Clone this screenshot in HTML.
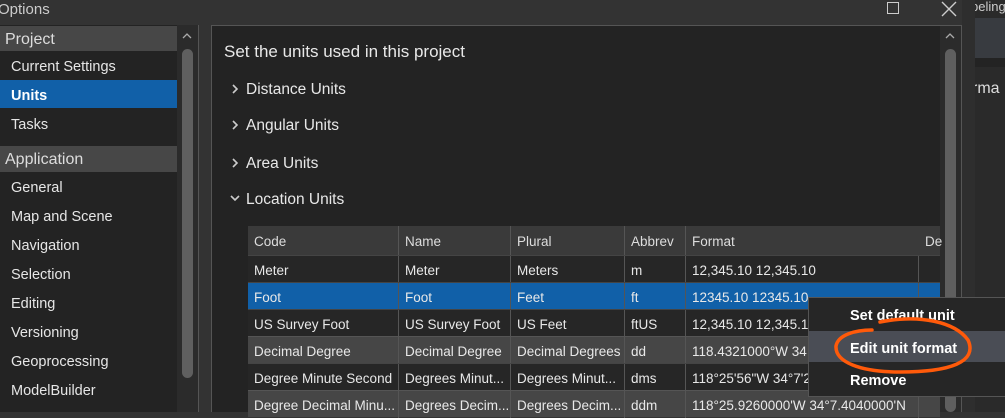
<!DOCTYPE html><html><head><style>
*{margin:0;padding:0;box-sizing:border-box}
body{width:1005px;height:412px;overflow:hidden;background:#333;font-family:"Liberation Sans",sans-serif;color:#e8e8e8;position:relative}
.a{position:absolute}
.li{position:absolute;left:11px;font-size:14.5px;color:#e6e6e6}
.hd{position:absolute;left:0;width:177px;background:#474747;font-size:16px;padding-left:5px;color:#ddd}
.row{position:absolute;left:248px;width:692px;height:27px;font-size:13.5px}
.row div{position:absolute;top:0;height:27px;line-height:29px;padding-left:6px;border-right:1px solid #555;white-space:nowrap;overflow:hidden}
.mi{position:absolute;left:0;width:197px;font-size:14.5px;font-weight:bold;color:#fff;padding-left:41px}
</style></head><body>
<div class="a" style="left:0;top:0;width:975px;height:25px;background:#333"></div>
<div class="a" style="left:-2px;top:1px;font-size:15px;color:#ccc">Options</div>
<div class="a" style="left:887px;top:2px;width:12px;height:12px;border:1.5px solid #ccc"></div>
<svg class="a" style="left:941px;top:1px" width="16" height="16"><path d="M1 1L15 15M15 1L1 15" stroke="#ccc" stroke-width="1.4"/></svg>
<div class="a" style="left:0;top:25px;width:199px;height:387px;background:#232323;border-right:1px solid #555"></div>
<div class="a" style="left:177px;top:25px;width:21px;height:387px;background:#2b2b2b"></div>
<svg class="a" style="left:181px;top:32px" width="12" height="8"><path d="M2 6L6 2L10 6" stroke="#aaa" fill="none" stroke-width="1.3"/></svg>
<div class="a" style="left:182px;top:49px;width:11px;height:329px;background:#5f5f5f;border-radius:6px"></div>
<div class="hd" style="top:26px;height:25px;line-height:27px">Project</div>
<div class="li" style="top:59px">Current Settings</div>
<div class="a" style="left:0;top:80px;width:177px;height:28px;background:#1160a8"></div>
<div class="li" style="top:88px;font-weight:bold;color:#fff">Units</div>
<div class="li" style="top:117px">Tasks</div>
<div class="hd" style="top:146px;height:26px;line-height:28px">Application</div>
<div class="li" style="top:180px">General</div>
<div class="li" style="top:209px">Map and Scene</div>
<div class="li" style="top:238px">Navigation</div>
<div class="li" style="top:267px">Selection</div>
<div class="li" style="top:296px">Editing</div>
<div class="li" style="top:325px">Versioning</div>
<div class="li" style="top:354px">Geoprocessing</div>
<div class="li" style="top:383px">ModelBuilder</div>
<div class="a" style="left:211px;top:25px;width:751px;height:387px;background:#232323;border:1px solid #555;border-bottom:none"></div>
<div class="a" style="left:940px;top:26px;width:21px;height:386px;background:#2b2b2b"></div>
<svg class="a" style="left:944px;top:32px" width="12" height="8"><path d="M2 6L6 2L10 6" stroke="#aaa" fill="none" stroke-width="1.3"/></svg>
<div class="a" style="left:945px;top:49px;width:11px;height:363px;background:#5f5f5f;border-radius:6px"></div>
<div class="a" style="left:224px;top:42px;font-size:17px;color:#e8e8e8">Set the units used in this project</div>
<svg class="a" style="left:230px;top:83px" width="10" height="12"><path d="M3 2L7 6L3 10" stroke="#ccc" fill="none" stroke-width="1.6"/></svg>
<div class="a" style="left:246px;top:81px;font-size:15.5px">Distance Units</div>
<svg class="a" style="left:230px;top:119px" width="10" height="12"><path d="M3 2L7 6L3 10" stroke="#ccc" fill="none" stroke-width="1.6"/></svg>
<div class="a" style="left:246px;top:117px;font-size:15.5px">Angular Units</div>
<svg class="a" style="left:230px;top:157px" width="10" height="12"><path d="M3 2L7 6L3 10" stroke="#ccc" fill="none" stroke-width="1.6"/></svg>
<div class="a" style="left:246px;top:155px;font-size:15.5px">Area Units</div>
<svg class="a" style="left:229px;top:193px" width="12" height="10"><path d="M2 3L6 7L10 3" stroke="#ccc" fill="none" stroke-width="1.6"/></svg>
<div class="a" style="left:246px;top:191px;font-size:15.5px">Location Units</div>
<div class="row" style="top:226px;height:29px;background:#3a3a3a;color:#ddd"><div style="left:0;width:151px;height:29px;line-height:31px">Code</div><div style="left:151px;width:112px;height:29px;line-height:31px">Name</div><div style="left:263px;width:114px;height:29px;line-height:31px">Plural</div><div style="left:377px;width:61px;height:29px;line-height:31px">Abbrev</div><div style="left:438px;width:233px;height:29px;line-height:31px;border-right:none">Format</div><div style="left:671px;width:30px;height:29px;line-height:31px;border:none">De</div></div>
<div class="row" style="top:255px;background:#262626;border-top:1px solid #444"><div style="left:0;width:151px">Meter</div><div style="left:151px;width:112px">Meter</div><div style="left:263px;width:114px">Meters</div><div style="left:377px;width:61px">m</div><div style="left:438px;width:233px">12,345.10 12,345.10</div></div>
<div class="row" style="top:282px;background:#1160a8;border-top:1px solid #444"><div style="left:0;width:151px">Foot</div><div style="left:151px;width:112px">Foot</div><div style="left:263px;width:114px">Feet</div><div style="left:377px;width:61px">ft</div><div style="left:438px;width:233px">12345.10 12345.10</div></div>
<div class="row" style="top:309px;background:#262626;border-top:1px solid #444"><div style="left:0;width:151px">US Survey Foot</div><div style="left:151px;width:112px">US Survey Foot</div><div style="left:263px;width:114px">US Feet</div><div style="left:377px;width:61px">ftUS</div><div style="left:438px;width:233px">12,345.10 12,345.10</div></div>
<div class="row" style="top:336px;background:#464646;border-top:1px solid #555"><div style="left:0;width:151px">Decimal Degree</div><div style="left:151px;width:112px">Decimal Degree</div><div style="left:263px;width:114px">Decimal Degrees</div><div style="left:377px;width:61px">dd</div><div style="left:438px;width:233px">118.4321000°W 34.1234000°N</div></div>
<div class="row" style="top:363px;background:#262626;border-top:1px solid #444"><div style="left:0;width:151px">Degree Minute Second</div><div style="left:151px;width:112px">Degrees Minut...</div><div style="left:263px;width:114px">Degrees Minut...</div><div style="left:377px;width:61px">dms</div><div style="left:438px;width:233px">118°25'56"W 34°7'24"N</div></div>
<div class="row" style="top:390px;background:#464646;border-top:1px solid #555"><div style="left:0;width:151px">Degree Decimal Minu...</div><div style="left:151px;width:112px">Degrees Decim...</div><div style="left:263px;width:114px">Degrees Decim...</div><div style="left:377px;width:61px">ddm</div><div style="left:438px;width:233px">118°25.9260000'W 34°7.4040000'N</div></div>
<div class="a" style="left:962px;top:0;width:13px;height:412px;background:#2e2e2e"></div>
<div class="a" style="left:975px;top:0;width:30px;height:412px;background:#2a2a2a;overflow:hidden">
<div class="a" style="left:0;top:18px;width:30px;height:40px;background:#383b40"></div>
<div class="a" style="left:0;top:58px;width:30px;height:9px;background:#232323"></div>
<div class="a" style="left:-4px;top:-1px;font-size:13px;color:#ccc">peling</div>
<div class="a" style="left:-3px;top:80px;font-size:16px;color:#ddd">rma</div>
</div>
<div class="a" style="left:808px;top:297px;width:200px;height:100px;background:#262626;border:1px solid #555">
<div class="mi" style="top:10px">Set default unit</div>
<div class="a" style="left:0;top:33px;width:200px;height:31px;background:#4a4d55"></div>
<div class="mi" style="top:43px">Edit unit format</div>
<div class="mi" style="top:75px">Remove</div>
</div>
<svg class="a" style="left:800px;top:300px" width="205" height="80"><path d="M80 22C120 14 155 22 168 40C178 62 150 72 100 72C60 72 35 62 36 46C38 35 55 30 72 30" stroke="#ff5a0a" stroke-width="3.5" fill="none" stroke-linecap="round"/></svg>
</body></html>
